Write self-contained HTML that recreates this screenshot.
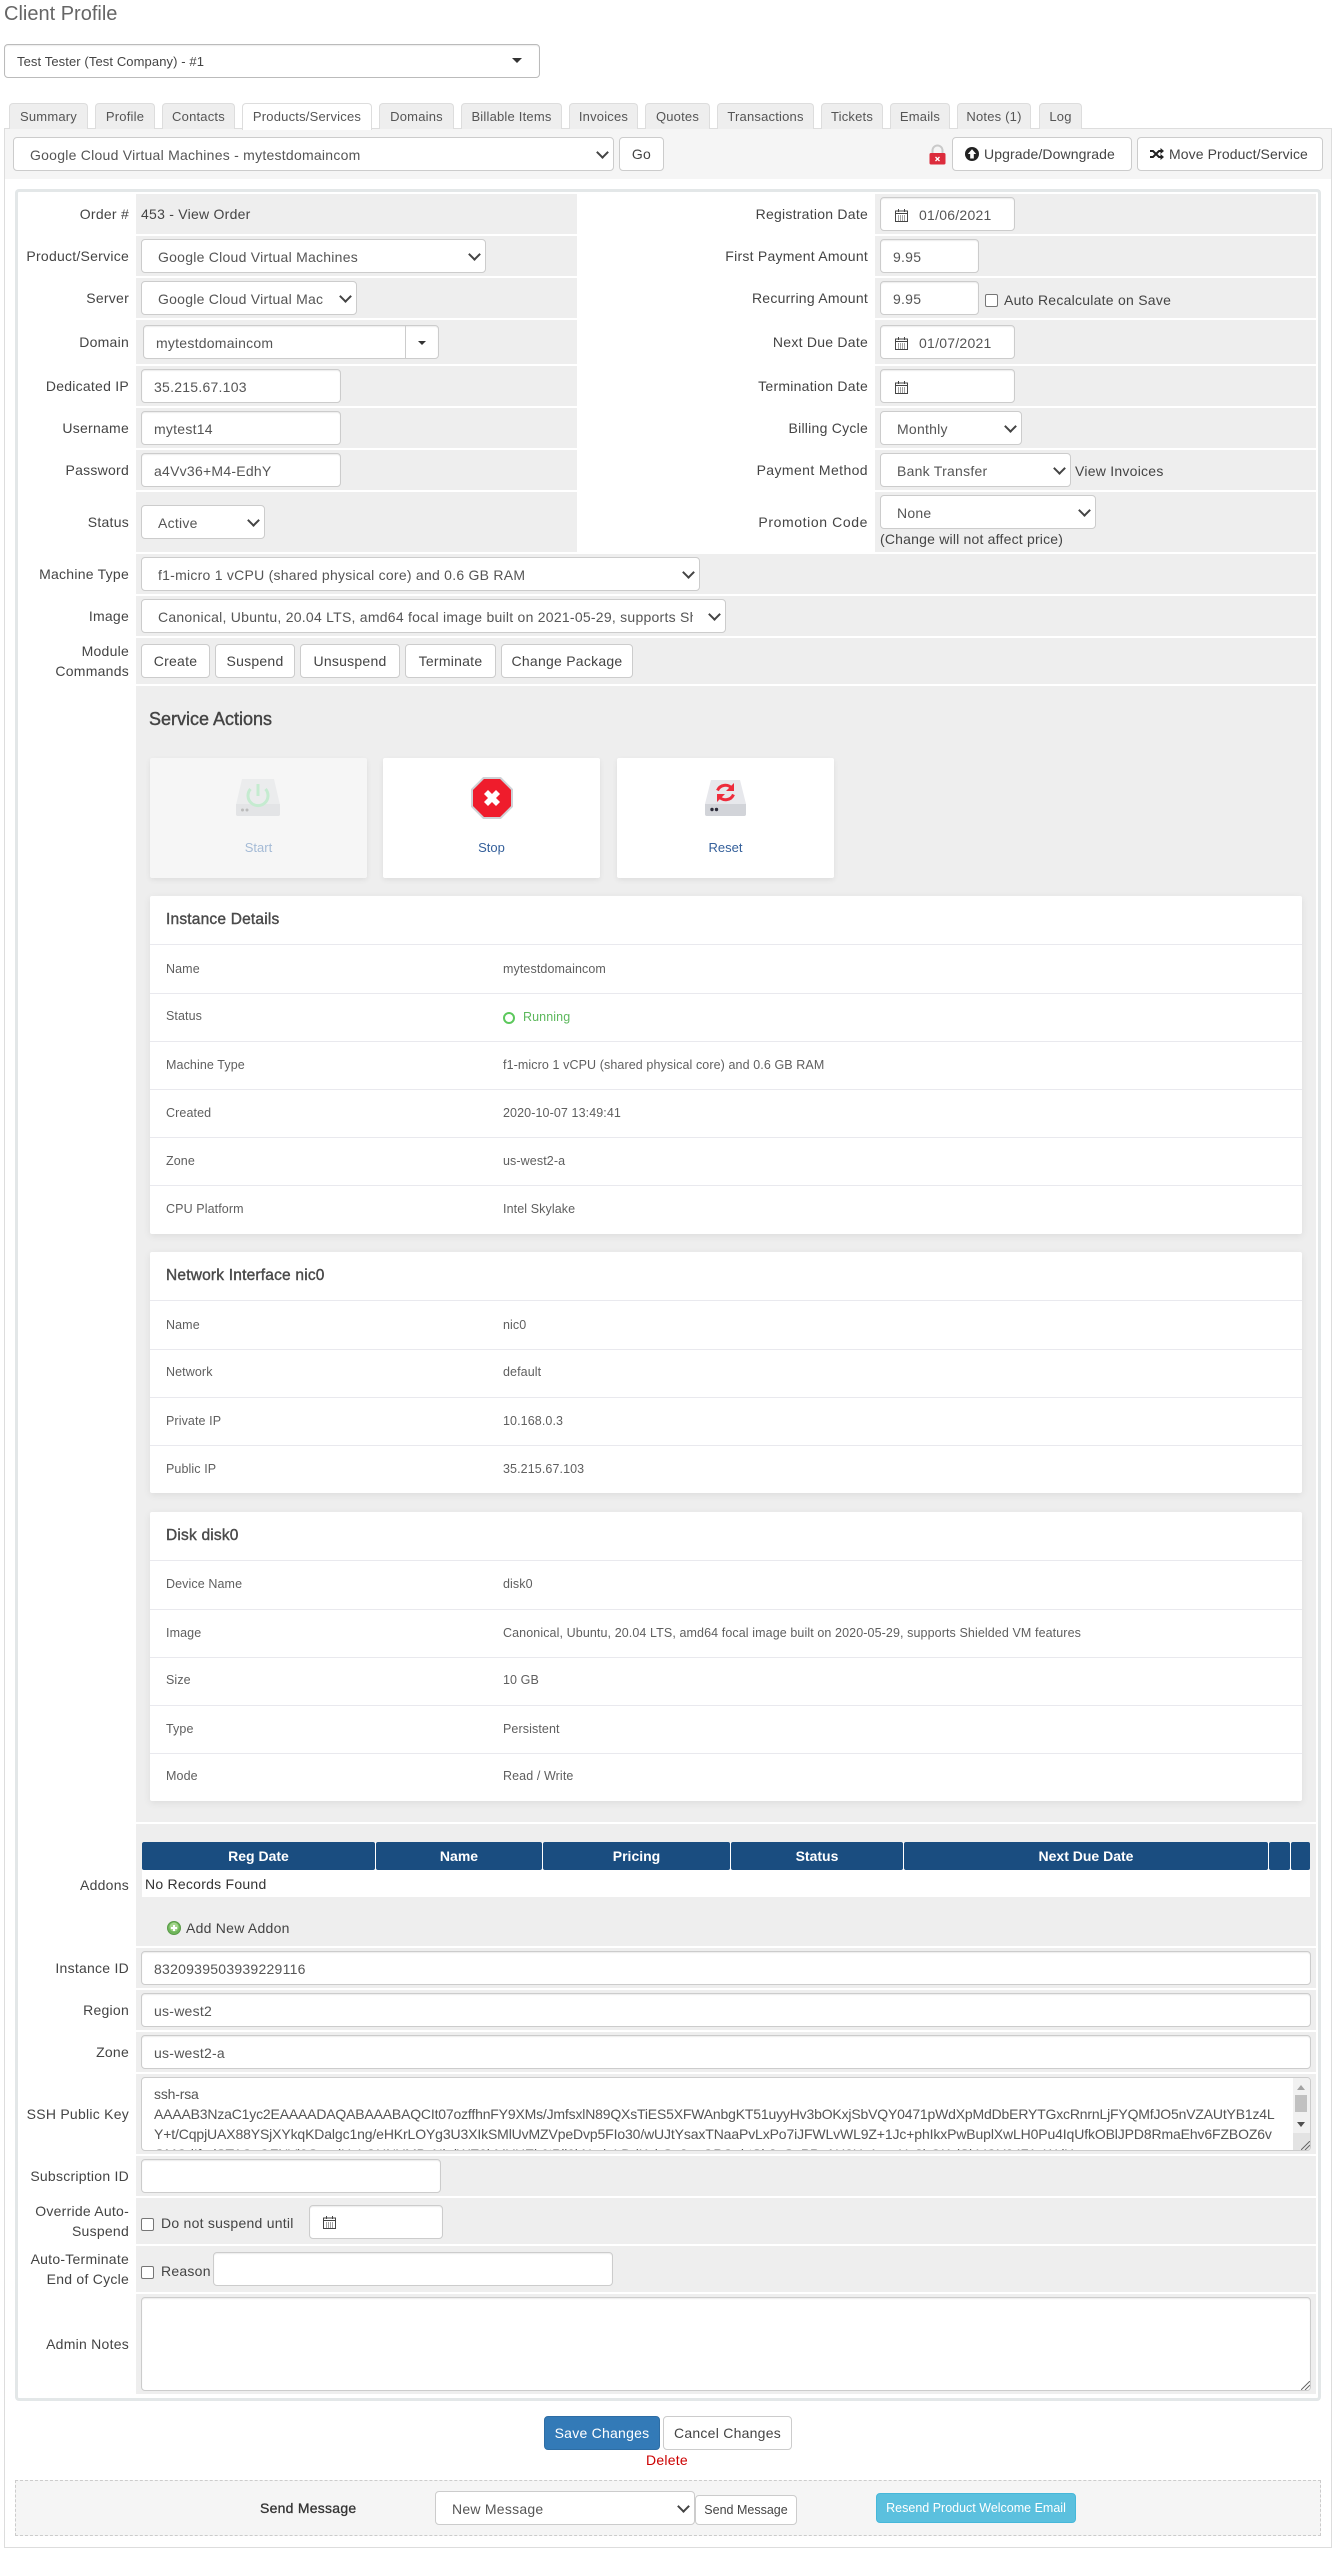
<!DOCTYPE html>
<html><head><meta charset="utf-8"><title>Client Profile</title>
<style>
html,body{margin:0;padding:0;background:#fff}
body{position:relative;width:1336px;height:2558px;overflow:hidden;font-family:"Liberation Sans",Arial,sans-serif;font-size:14px;letter-spacing:.25px;color:#444}
div,span,svg{box-sizing:border-box}
.a{position:absolute}
.t{position:absolute;white-space:nowrap;line-height:20px;height:20px}
.l{position:absolute;white-space:nowrap;line-height:20px;height:20px;left:0;width:129px;text-align:right;color:#444}
.m{position:absolute;white-space:nowrap;line-height:20px;height:20px;left:600px;width:268px;text-align:right;color:#444}
.r{position:absolute;background:#eee}
.i{position:absolute;background:#fff;border:1px solid #ccc;border-radius:4px;height:34px;padding:2px 12px 0;line-height:30px;color:#555;white-space:nowrap;box-shadow:inset 0 1px 1px rgba(0,0,0,.075)}
.s{padding-right:32px;box-shadow:none}
.s span{display:block;overflow:hidden;margin-left:4px}
.s:after{content:"";position:absolute;right:6px;top:10px;width:7px;height:7px;border-right:2px solid #444;border-bottom:2px solid #444;transform:rotate(45deg)}
.b{position:absolute;background:#fff;border:1px solid #ccc;border-radius:4px;height:34px;line-height:32px;text-align:center;color:#444;white-space:nowrap}
.tab{position:absolute;top:103px;height:26px;background:#eee;border:1px solid #ddd;border-bottom:0;border-radius:4px 4px 0 0;line-height:26px;text-align:center;font-size:13px;letter-spacing:.2px;color:#555;white-space:nowrap}
.cb{position:absolute;width:13px;height:13px;background:#fff;border:1px solid #767676;border-radius:2px}
.card{position:absolute;left:150px;width:1152px;background:#fff;border-radius:2px;box-shadow:0 2px 8px rgba(0,0,0,.08)}
.ct{position:absolute;left:16px;white-space:nowrap;font-size:15.5px;letter-spacing:.2px;line-height:20px;color:#4a4a4a;-webkit-text-stroke:.4px #4a4a4a}
.d{position:absolute;left:0;right:0;height:1px;background:#e9e9ee}
.k,.v{position:absolute;white-space:nowrap;font-size:12.5px;letter-spacing:.1px;line-height:20px;color:#5f5f5f}
.k{left:16px}.v{left:353px}
.act{position:absolute;top:758px;width:217px;height:120px;background:#fff;border-radius:2px;box-shadow:0 2px 6px rgba(0,0,0,.07);text-align:center;font-size:13px;letter-spacing:0;line-height:20px;color:#35609b}
.act b{font-weight:normal;position:absolute;left:0;right:0;top:80px}
.th{position:absolute;top:1842px;height:28px;background:#1a4d80;color:#fff;font-weight:bold;font-size:14px;letter-spacing:0;line-height:28px;text-align:center;border-radius:2px}
</style></head><body>

<div class="t" style="left:4px;top:4px;font-size:20px;letter-spacing:0;color:#666">Client Profile</div>

<div class="i" style="left:4px;top:44px;width:536px;padding:0 12px;line-height:34px;color:#444;font-size:13px;letter-spacing:.1px;border-color:#bbb">Test Tester (Test Company) - #1</div>
<div class="a" style="left:512px;top:58px;width:0;height:0;border-left:5px solid transparent;border-right:5px solid transparent;border-top:5px solid #333"></div>

<!-- tab content -->
<div class="a" style="left:4px;top:128px;width:1328px;height:2420px;border:1px solid #ddd;background:#fff"></div>
<div class="a" style="left:5px;top:129px;width:1326px;height:50px;background:#f5f5f5"></div>

<div class="tab" style="left:9px;width:79px">Summary</div>
<div class="tab" style="left:95px;width:60px">Profile</div>
<div class="tab" style="left:162px;width:73px">Contacts</div>
<div class="tab" style="left:242px;width:130px;background:#fff;height:27px">Products/Services</div>
<div class="tab" style="left:379px;width:75px">Domains</div>
<div class="tab" style="left:461px;width:101px">Billable Items</div>
<div class="tab" style="left:569px;width:69px">Invoices</div>
<div class="tab" style="left:645px;width:65px">Quotes</div>
<div class="tab" style="left:717px;width:97px">Transactions</div>
<div class="tab" style="left:821px;width:62px">Tickets</div>
<div class="tab" style="left:890px;width:60px">Emails</div>
<div class="tab" style="left:957px;width:74px">Notes (1)</div>
<div class="tab" style="left:1039px;width:43px">Log</div>

<div class="i s" style="left:13px;top:137px;width:601px"><span>Google Cloud Virtual Machines - mytestdomaincom</span></div>
<div class="b" style="left:619px;top:137px;width:45px">Go</div>

<svg class="a" style="left:929px;top:144px" width="17" height="21" viewBox="0 0 17 21"><path d="M3.5 10V6.5a5 5 0 0 1 10 0V10" fill="none" stroke="#c9c9c9" stroke-width="2"/><rect x="0.5" y="9" width="16" height="11.5" rx="1.5" fill="#dc2c3c"/><path d="M6.5 13l4 4M10.5 13l-4 4" stroke="#fff" stroke-width="1.3"/></svg>
<div class="b" style="left:952px;top:137px;width:180px;padding-left:31px;text-align:left;font-size:14px;letter-spacing:.1px">Upgrade/Downgrade</div>
<svg class="a" style="left:965px;top:147px" width="14" height="14" viewBox="0 0 14 14"><circle cx="7" cy="7" r="7" fill="#222"/><path d="M7 2.2L11.2 7H8.8v4.5H5.2V7H2.8z" fill="#fff"/></svg>
<div class="b" style="left:1137px;top:137px;width:186px;padding-left:31px;text-align:left;font-size:14px;letter-spacing:.1px">Move Product/Service</div>
<svg class="a" style="left:1150px;top:148px" width="14" height="12" viewBox="0 0 14 12"><path d="M0 3h3l6 6h2M0 9h3l6-6h2" fill="none" stroke="#222" stroke-width="2"/><path d="M10.5 0L14 3l-3.500 3zM10.500 6L14 9l-3.500 3z" fill="#222"/></svg>

<!-- form box -->
<div class="a" style="left:15px;top:189px;width:1306px;height:212px;border:3px solid #e3e7e8;border-bottom:0;border-radius:4px 4px 0 0"></div>
<div class="a" style="left:15px;top:395px;width:1306px;height:2006px;border:3px solid #e3e7e8;border-top:0;border-radius:0 0 4px 4px"></div>

<!-- rows -->
<div class="r" style="left:136px;top:194px;width:441px;height:40px"></div>
<div class="r" style="left:136px;top:236px;width:441px;height:40px"></div>
<div class="r" style="left:136px;top:278px;width:441px;height:40px"></div>
<div class="r" style="left:136px;top:320px;width:441px;height:44px"></div>
<div class="r" style="left:136px;top:366px;width:441px;height:40px"></div>
<div class="r" style="left:136px;top:408px;width:441px;height:40px"></div>
<div class="r" style="left:136px;top:450px;width:441px;height:40px"></div>
<div class="r" style="left:136px;top:492px;width:441px;height:60px"></div>
<div class="r" style="left:875px;top:194px;width:441px;height:40px"></div>
<div class="r" style="left:875px;top:236px;width:441px;height:40px"></div>
<div class="r" style="left:875px;top:278px;width:441px;height:40px"></div>
<div class="r" style="left:875px;top:320px;width:441px;height:44px"></div>
<div class="r" style="left:875px;top:366px;width:441px;height:40px"></div>
<div class="r" style="left:875px;top:408px;width:441px;height:40px"></div>
<div class="r" style="left:875px;top:450px;width:441px;height:40px"></div>
<div class="r" style="left:875px;top:492px;width:441px;height:60px"></div>
<div class="r" style="left:136px;top:554px;width:1180px;height:40px"></div>
<div class="r" style="left:136px;top:596px;width:1180px;height:40px"></div>
<div class="r" style="left:136px;top:638px;width:1180px;height:46px"></div>
<div class="r" style="left:136px;top:686px;width:1180px;height:1136px"></div>
<div class="r" style="left:136px;top:1824px;width:1180px;height:122px"></div>
<div class="r" style="left:136px;top:1948px;width:1180px;height:40px"></div>
<div class="r" style="left:136px;top:1990px;width:1180px;height:40px"></div>
<div class="r" style="left:136px;top:2032px;width:1180px;height:40px"></div>
<div class="r" style="left:136px;top:2074px;width:1180px;height:80px"></div>
<div class="r" style="left:136px;top:2156px;width:1180px;height:40px"></div>
<div class="r" style="left:136px;top:2198px;width:1180px;height:46px"></div>
<div class="r" style="left:136px;top:2246px;width:1180px;height:46px"></div>
<div class="r" style="left:136px;top:2294px;width:1180px;height:100px"></div>

<!-- left labels -->
<div class="l" style="top:204px">Order #</div>
<div class="t" style="left:141px;top:204px">453 - View Order</div>
<div class="l" style="top:246px">Product/Service</div>
<div class="i s" style="left:141px;top:239px;width:345px"><span>Google Cloud Virtual Machines</span></div>
<div class="l" style="top:288px">Server</div>
<div class="i s" style="left:141px;top:281px;width:216px"><span>Google Cloud Virtual Machines</span></div>
<div class="l" style="top:332px">Domain</div>
<div class="i" style="left:143px;top:325px;width:296px">mytestdomaincom</div>
<div class="a" style="left:405px;top:325px;width:1px;height:34px;background:#ccc"></div>
<div class="a" style="left:418px;top:341px;width:0;height:0;border-left:4px solid transparent;border-right:4px solid transparent;border-top:4px solid #333"></div>
<div class="l" style="top:376px">Dedicated IP</div>
<div class="i" style="left:141px;top:369px;width:200px">35.215.67.103</div>
<div class="l" style="top:418px">Username</div>
<div class="i" style="left:141px;top:411px;width:200px">mytest14</div>
<div class="l" style="top:460px">Password</div>
<div class="i" style="left:141px;top:453px;width:200px">a4Vv36+M4-EdhY</div>
<div class="l" style="top:512px">Status</div>
<div class="i s" style="left:141px;top:505px;width:124px"><span>Active</span></div>

<!-- right labels -->
<div class="m" style="top:204px">Registration Date</div>
<div class="i" style="left:880px;top:197px;width:135px;padding-left:38px">01/06/2021</div>
<svg class="a" style="left:895px;top:208px" width="13" height="14" viewBox="0 0 13 14"><path d="M.5 3h12v10.500H.5zM.5 5.500h12M3.500 1v3M9.500 1v3" fill="none" stroke="#444"/><path d="M3 8h7M3 10h7M3 12h7" stroke="#444" stroke-dasharray="1 1"/></svg>
<div class="m" style="top:246px">First Payment Amount</div>
<div class="i" style="left:880px;top:239px;width:99px">9.95</div>
<div class="m" style="top:288px">Recurring Amount</div>
<div class="i" style="left:880px;top:281px;width:99px">9.95</div>
<div class="cb" style="left:985px;top:294px"></div>
<div class="t" style="left:1004px;top:290px">Auto Recalculate on Save</div>
<div class="m" style="top:332px">Next Due Date</div>
<div class="i" style="left:880px;top:325px;width:135px;padding-left:38px">01/07/2021</div>
<svg class="a" style="left:895px;top:336px" width="13" height="14" viewBox="0 0 13 14"><path d="M.5 3h12v10.500H.5zM.5 5.500h12M3.500 1v3M9.500 1v3" fill="none" stroke="#444"/><path d="M3 8h7M3 10h7M3 12h7" stroke="#444" stroke-dasharray="1 1"/></svg>
<div class="m" style="top:376px">Termination Date</div>
<div class="i" style="left:880px;top:369px;width:135px"></div>
<svg class="a" style="left:895px;top:380px" width="13" height="14" viewBox="0 0 13 14"><path d="M.5 3h12v10.500H.5zM.5 5.500h12M3.500 1v3M9.500 1v3" fill="none" stroke="#444"/><path d="M3 8h7M3 10h7M3 12h7" stroke="#444" stroke-dasharray="1 1"/></svg>
<div class="m" style="top:418px">Billing Cycle</div>
<div class="i s" style="left:880px;top:411px;width:142px"><span>Monthly</span></div>
<div class="m" style="top:460px;letter-spacing:.4px">Payment Method</div>
<div class="i s" style="left:880px;top:453px;width:191px"><span>Bank Transfer</span></div>
<div class="t" style="left:1075px;top:461px">View Invoices</div>
<div class="m" style="top:512px;letter-spacing:.6px">Promotion Code</div>
<div class="i s" style="left:880px;top:495px;width:216px"><span>None</span></div>
<div class="t" style="left:880px;top:529px;letter-spacing:.2px">(Change will not affect price)</div>

<!-- full-width rows -->
<div class="l" style="top:564px">Machine Type</div>
<div class="i s" style="left:141px;top:557px;width:559px"><span>f1-micro 1 vCPU (shared physical core) and 0.6 GB RAM</span></div>
<div class="l" style="top:606px">Image</div>
<div class="i s" style="left:141px;top:599px;width:585px"><span>Canonical, Ubuntu, 20.04 LTS, amd64 focal image built on 2021-05-29, supports Shielded VM features</span></div>
<div class="l" style="top:641px">Module</div>
<div class="l" style="top:661px">Commands</div>
<div class="b" style="left:141px;top:644px;width:69px">Create</div>
<div class="b" style="left:215px;top:644px;width:80px">Suspend</div>
<div class="b" style="left:300px;top:644px;width:100px">Unsuspend</div>
<div class="b" style="left:405px;top:644px;width:91px">Terminate</div>
<div class="b" style="left:501px;top:644px;width:132px">Change Package</div>

<!-- Service actions -->
<div class="t" style="left:149px;top:709px;font-size:18px;letter-spacing:0;color:#444;-webkit-text-stroke:.4px #444">Service Actions</div>

<div class="act" style="left:150px;background:#f6f6f6;color:#a5bbd6"><b>Start</b></div>
<div class="act" style="left:383px"><b>Stop</b></div>
<div class="act" style="left:617px"><b>Reset</b></div>

<svg class="a" style="left:236px;top:779px" width="44" height="38" viewBox="0 0 44 38"><path d="M6 0h32l6 26v9a2 2 0 0 1-2 2H2a2 2 0 0 1-2-2v-9z" fill="#ebeced"/><path d="M0 25h44v10a2 2 0 0 1-2 2H2a2 2 0 0 1-2-2z" fill="#e3e4e6"/><circle cx="6.500" cy="31" r="1.500" fill="#bbb"/><circle cx="11" cy="31" r="1.500" fill="#bbb"/><path d="M14.500 10a10 10 0 1 0 15 0M22 5v12" fill="none" stroke="#c5ebd0" stroke-width="3"/></svg>
<svg class="a" style="left:471px;top:777px" width="42" height="42" viewBox="0 0 42 42"><path d="M12.500 1h17L41 12.500v17L29.500 41h-17L1 29.500v-17z" fill="#ef1c2c" stroke="#cfd2d6" stroke-width="2"/><path d="M13 17l4-4 4 4 4-4 4 4-4 4 4 4-4 4-4-4-4 4-4-4 4-4z" fill="#fff"/></svg>
<svg class="a" style="left:705px;top:780px" width="41" height="36" viewBox="0 0 41 36"><path d="M6 0h29l6 24v10a2 2 0 0 1-2 2H2a2 2 0 0 1-2-2V24z" fill="#e7e8ec"/><path d="M0 24h41v10a2 2 0 0 1-2 2H2a2 2 0 0 1-2-2z" fill="#d2d4d9"/><circle cx="7" cy="29.500" r="1.700" fill="#2d2d3a"/><circle cx="11.500" cy="29.500" r="1.700" fill="#2d2d3a"/><path d="M12.500 10.500A8.500 8.500 0 0 1 27 8.500M28.500 14.500A8.500 8.500 0 0 1 14 16.500" fill="none" stroke="#ee2c3c" stroke-width="3"/><path d="M29 3v8h-8zM12 22v-8h8z" fill="#ee2c3c"/></svg>

<!-- Instance card -->
<div class="card" style="top:896px;height:338px">
 <div class="ct" style="top:14px">Instance Details</div>
 <div class="d" style="top:48px"></div>
 <div class="k" style="top:63px">Name</div><div class="v" style="top:63px">mytestdomaincom</div>
 <div class="d" style="top:97px"></div>
 <div class="k" style="top:110px">Status</div>
 <div class="a" style="left:353px;top:116px;width:12px;height:12px;border:2px solid #5cc85c;border-radius:50%"></div>
 <div class="v" style="left:373px;top:111px;color:#5cb85c">Running</div>
 <div class="d" style="top:145px"></div>
 <div class="k" style="top:159px">Machine Type</div><div class="v" style="top:159px">f1-micro 1 vCPU (shared physical core) and 0.6 GB RAM</div>
 <div class="d" style="top:193px"></div>
 <div class="k" style="top:207px">Created</div><div class="v" style="top:207px">2020-10-07 13:49:41</div>
 <div class="d" style="top:241px"></div>
 <div class="k" style="top:255px">Zone</div><div class="v" style="top:255px">us-west2-a</div>
 <div class="d" style="top:289px"></div>
 <div class="k" style="top:303px">CPU Platform</div><div class="v" style="top:303px">Intel Skylake</div>
</div>

<!-- Network card -->
<div class="card" style="top:1252px;height:241px">
 <div class="ct" style="top:14px">Network Interface nic0</div>
 <div class="d" style="top:48px"></div>
 <div class="k" style="top:63px">Name</div><div class="v" style="top:63px">nic0</div>
 <div class="d" style="top:97px"></div>
 <div class="k" style="top:110px">Network</div><div class="v" style="top:110px">default</div>
 <div class="d" style="top:145px"></div>
 <div class="k" style="top:159px">Private IP</div><div class="v" style="top:159px">10.168.0.3</div>
 <div class="d" style="top:193px"></div>
 <div class="k" style="top:207px">Public IP</div><div class="v" style="top:207px">35.215.67.103</div>
</div>

<!-- Disk card -->
<div class="card" style="top:1512px;height:289px">
 <div class="ct" style="top:14px">Disk disk0</div>
 <div class="d" style="top:48px"></div>
 <div class="k" style="top:62px">Device Name</div><div class="v" style="top:62px">disk0</div>
 <div class="d" style="top:97px"></div>
 <div class="k" style="top:111px">Image</div><div class="v" style="top:111px">Canonical, Ubuntu, 20.04 LTS, amd64 focal image built on 2020-05-29, supports Shielded VM features</div>
 <div class="d" style="top:145px"></div>
 <div class="k" style="top:158px">Size</div><div class="v" style="top:158px">10 GB</div>
 <div class="d" style="top:193px"></div>
 <div class="k" style="top:207px">Type</div><div class="v" style="top:207px">Persistent</div>
 <div class="d" style="top:241px"></div>
 <div class="k" style="top:254px">Mode</div><div class="v" style="top:254px">Read / Write</div>
</div>

<!-- Addons -->
<div class="l" style="top:1875px">Addons</div>
<div class="a" style="left:142px;top:1842px;width:1168px;height:55px;background:#fff"></div>
<div class="th" style="left:142px;width:233px">Reg Date</div>
<div class="th" style="left:376px;width:166px">Name</div>
<div class="th" style="left:543px;width:187px">Pricing</div>
<div class="th" style="left:731px;width:172px">Status</div>
<div class="th" style="left:904px;width:364px">Next Due Date</div>
<div class="th" style="left:1269px;width:21px"></div>
<div class="th" style="left:1291px;width:19px"></div>
<div class="t" style="left:145px;top:1874px;color:#333">No Records Found</div>
<svg class="a" style="left:167px;top:1921px" width="14" height="14" viewBox="0 0 14 14"><circle cx="7" cy="7" r="6.500" fill="#6fb55a" stroke="#5a9a48"/><circle cx="7" cy="6" r="4.500" fill="#a4d68d"/><path d="M7 4v6M4 7h6" stroke="#fff" stroke-width="2"/></svg>
<div class="t" style="left:186px;top:1918px">Add New Addon</div>

<div class="l" style="top:1958px">Instance ID</div>
<div class="i" style="left:141px;top:1951px;width:1170px">8320939503939229116</div>
<div class="l" style="top:2000px">Region</div>
<div class="i" style="left:141px;top:1993px;width:1170px">us-west2</div>
<div class="l" style="top:2042px">Zone</div>
<div class="i" style="left:141px;top:2035px;width:1170px">us-west2-a</div>

<div class="l" style="top:2104px">SSH Public Key</div>
<div class="a" style="left:141px;top:2077px;width:1170px;height:74px;background:#fff;border:1px solid #ccc;border-radius:4px;overflow:hidden;color:#555;line-height:20px;white-space:nowrap;padding:6px 0 0 12px;font-size:14px;letter-spacing:-.18px">ssh-rsa<br>AAAAB3NzaC1yc2EAAAADAQABAAABAQCIt07ozffhnFY9XMs/JmfsxlN89QXsTiES5XFWAnbgKT51uyyHv3bOKxjSbVQY0471pWdXpMdDbERYTGxcRnrnLjFYQMfJO5nVZAUtYB1z4L<br><span style="letter-spacing:-.13px">Y+t/CqpjUAX88YSjXYkqKDalgc1ng/eHKrLOYg3U3XIkSMlUvMZVpeDvp5FIo30/wUJtYsaxTNaaPvLxPo7iJFWLvWL9Z+1Jc+phIkxPwBuplXwLH0Pu4IqUfkOBlJPD8RmaEhv6FZBOZ6v</span><br>GMCdIfgdST1QzQFNVi0GgqdUxLQHNYMBvNkdWE9hMYHEk6tPll9kNvdnLDdKxbGc8ggOPOabtSh3zGvPPzAH0Hc1uyyHv3bOKxjSbVQY0471pWdXp
 <div class="a" style="right:0;top:0;width:17px;height:72px;background:#f1f1f1"></div>
 <div class="a" style="right:3px;top:17px;width:12px;height:17px;background:#c1c1c1"></div>
 <div class="a" style="right:5px;top:7px;width:0;height:0;border-left:4px solid transparent;border-right:4px solid transparent;border-bottom:5px solid #a3a3a3"></div>
 <div class="a" style="right:5px;top:44px;width:0;height:0;border-left:4px solid transparent;border-right:4px solid transparent;border-top:5px solid #505050"></div>
 <div class="a" style="right:0;top:55px;width:17px;height:17px;background:#e3e3e3"></div>
 <svg class="a" style="right:0;bottom:0" width="9" height="9" viewBox="0 0 9 9"><path d="M0 9L9 0M4 9L9 4" stroke="#666"/></svg>
</div>

<div class="l" style="top:2166px">Subscription ID</div>
<div class="i" style="left:141px;top:2159px;width:300px"></div>
<div class="l" style="top:2201px">Override Auto-</div>
<div class="l" style="top:2221px">Suspend</div>
<div class="cb" style="left:141px;top:2218px"></div>
<div class="t" style="left:161px;top:2213px">Do not suspend until</div>
<div class="i" style="left:309px;top:2205px;width:134px"></div>
<svg class="a" style="left:323px;top:2215px" width="13" height="14" viewBox="0 0 13 14"><path d="M.5 3h12v10.500H.5zM.5 5.500h12M3.500 1v3M9.500 1v3" fill="none" stroke="#444"/><path d="M3 8h7M3 10h7M3 12h7" stroke="#444" stroke-dasharray="1 1"/></svg>
<div class="l" style="top:2249px">Auto-Terminate</div>
<div class="l" style="top:2269px">End of Cycle</div>
<div class="cb" style="left:141px;top:2266px"></div>
<div class="t" style="left:161px;top:2261px">Reason</div>
<div class="i" style="left:213px;top:2252px;width:400px"></div>
<div class="l" style="top:2334px">Admin Notes</div>
<div class="i" style="left:141px;top:2297px;width:1170px;height:94px"></div>
<svg class="a" style="left:1301px;top:2381px" width="9" height="9" viewBox="0 0 9 9"><path d="M0 9L9 0M4 9L9 4" stroke="#666"/></svg>

<!-- bottom actions -->
<div class="b" style="left:544px;top:2416px;width:116px;background:#337ab7;border-color:#2e6da4;color:#fff">Save Changes</div>
<div class="b" style="left:663px;top:2416px;width:129px">Cancel Changes</div>
<div class="t" style="left:646px;top:2450px;color:#c00">Delete</div>

<div class="a" style="left:15px;top:2480px;width:1306px;height:56px;background:#f5f5f5;border:1px dashed #ccc"></div>
<div class="t" style="left:260px;top:2498px;color:#333;-webkit-text-stroke:.3px #333">Send Message</div>
<div class="i s" style="left:435px;top:2491px;width:260px"><span>New Message</span></div>
<div class="b" style="left:695px;top:2495px;width:102px;height:30px;line-height:28px;font-size:12.500px;letter-spacing:0">Send Message</div>
<div class="b" style="left:876px;top:2493px;width:200px;height:30px;line-height:28px;background:#5bc0de;border-color:#46b8da;color:#fff;font-size:12.500px;letter-spacing:0">Resend Product Welcome Email</div>

</body></html>
